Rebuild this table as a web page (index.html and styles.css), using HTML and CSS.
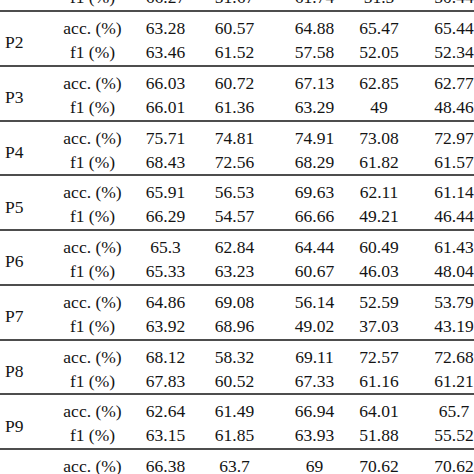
FILE: index.html
```html
<!DOCTYPE html>
<html>
<head>
<meta charset="utf-8">
<link rel="stylesheet" href="styles.css">
</head>
<body>
<div class="frame">
<table class="results">
  <colgroup>
    <col class="c-part"><col class="c-metric"><col class="c-1"><col class="c-2"><col class="c-3"><col class="c-4"><col class="c-5">
  </colgroup>
  <tbody class="block">
    <tr class="acc"><td class="part" rowspan="2">P1</td><td>acc. (%)</td><td>67.12</td><td>55.40</td><td>66.20</td><td>63.91</td><td>63.50</td></tr>
    <tr class="f1"><td>f1 (%)</td><td>66.27</td><td>51.67</td><td>61.74</td><td>51.5</td><td>50.44</td></tr>
  </tbody>
  <tbody class="block">
    <tr class="acc"><td class="part" rowspan="2">P2</td><td>acc. (%)</td><td>63.28</td><td>60.57</td><td>64.88</td><td>65.47</td><td>65.44</td></tr>
    <tr class="f1"><td>f1 (%)</td><td>63.46</td><td>61.52</td><td>57.58</td><td>52.05</td><td>52.34</td></tr>
  </tbody>
  <tbody class="block">
    <tr class="acc"><td class="part" rowspan="2">P3</td><td>acc. (%)</td><td>66.03</td><td>60.72</td><td>67.13</td><td>62.85</td><td>62.77</td></tr>
    <tr class="f1"><td>f1 (%)</td><td>66.01</td><td>61.36</td><td>63.29</td><td>49</td><td>48.46</td></tr>
  </tbody>
  <tbody class="block">
    <tr class="acc"><td class="part" rowspan="2">P4</td><td>acc. (%)</td><td>75.71</td><td>74.81</td><td>74.91</td><td>73.08</td><td>72.97</td></tr>
    <tr class="f1"><td>f1 (%)</td><td>68.43</td><td>72.56</td><td>68.29</td><td>61.82</td><td>61.57</td></tr>
  </tbody>
  <tbody class="block">
    <tr class="acc"><td class="part" rowspan="2">P5</td><td>acc. (%)</td><td>65.91</td><td>56.53</td><td>69.63</td><td>62.11</td><td>61.14</td></tr>
    <tr class="f1"><td>f1 (%)</td><td>66.29</td><td>54.57</td><td>66.66</td><td>49.21</td><td>46.44</td></tr>
  </tbody>
  <tbody class="block">
    <tr class="acc"><td class="part" rowspan="2">P6</td><td>acc. (%)</td><td>65.3</td><td>62.84</td><td>64.44</td><td>60.49</td><td>61.43</td></tr>
    <tr class="f1"><td>f1 (%)</td><td>65.33</td><td>63.23</td><td>60.67</td><td>46.03</td><td>48.04</td></tr>
  </tbody>
  <tbody class="block">
    <tr class="acc"><td class="part" rowspan="2">P7</td><td>acc. (%)</td><td>64.86</td><td>69.08</td><td>56.14</td><td>52.59</td><td>53.79</td></tr>
    <tr class="f1"><td>f1 (%)</td><td>63.92</td><td>68.96</td><td>49.02</td><td>37.03</td><td>43.19</td></tr>
  </tbody>
  <tbody class="block">
    <tr class="acc"><td class="part" rowspan="2">P8</td><td>acc. (%)</td><td>68.12</td><td>58.32</td><td>69.11</td><td>72.57</td><td>72.68</td></tr>
    <tr class="f1"><td>f1 (%)</td><td>67.83</td><td>60.52</td><td>67.33</td><td>61.16</td><td>61.21</td></tr>
  </tbody>
  <tbody class="block">
    <tr class="acc"><td class="part" rowspan="2">P9</td><td>acc. (%)</td><td>62.64</td><td>61.49</td><td>66.94</td><td>64.01</td><td>65.7</td></tr>
    <tr class="f1"><td>f1 (%)</td><td>63.15</td><td>61.85</td><td>63.93</td><td>51.88</td><td>55.52</td></tr>
  </tbody>
  <tbody class="block">
    <tr class="acc"><td class="part" rowspan="2">P10</td><td>acc. (%)</td><td>66.38</td><td>63.7</td><td>69</td><td>70.62</td><td>70.62</td></tr>
    <tr class="f1"><td>f1 (%)</td><td>65.90</td><td>62.48</td><td>67.55</td><td>64.20</td><td>64.31</td></tr>
  </tbody>
</table>
</div>
</body>
</html>
```

FILE: styles.css
```css
html, body {
  margin: 0;
  padding: 0;
  background: #ffffff;
  overflow: hidden;
}

.frame {
  width: 474px;
  height: 474px;
  overflow: hidden;
}

.results {
  border-collapse: separate;
  border-spacing: 0;
  table-layout: fixed;
  width: 501px;
  margin-top: -44.75px;
  font-family: "Liberation Serif", "Times New Roman", serif;
  font-size: 17.5px;
  color: #141414;
}

.c-part { width: 45px; }
.c-metric { width: 95px; }
.c-1 { width: 51px; }
.c-2 { width: 87px; }
.c-3 { width: 73px; }
.c-4 { width: 56px; }
.c-5 { width: 94px; }

.results td {
  padding: 0;
  text-align: center;
  white-space: nowrap;
  overflow: visible;
}

.acc td {
  border-top: 2px solid #4d4d4d;
  padding-top: 4px;
  line-height: 24px;
}

.f1 td {
  line-height: 24.75px;
}

.results td.part {
  text-align: left;
  padding-left: 5px;
  padding-top: 8px;
  vertical-align: middle;
}
```
